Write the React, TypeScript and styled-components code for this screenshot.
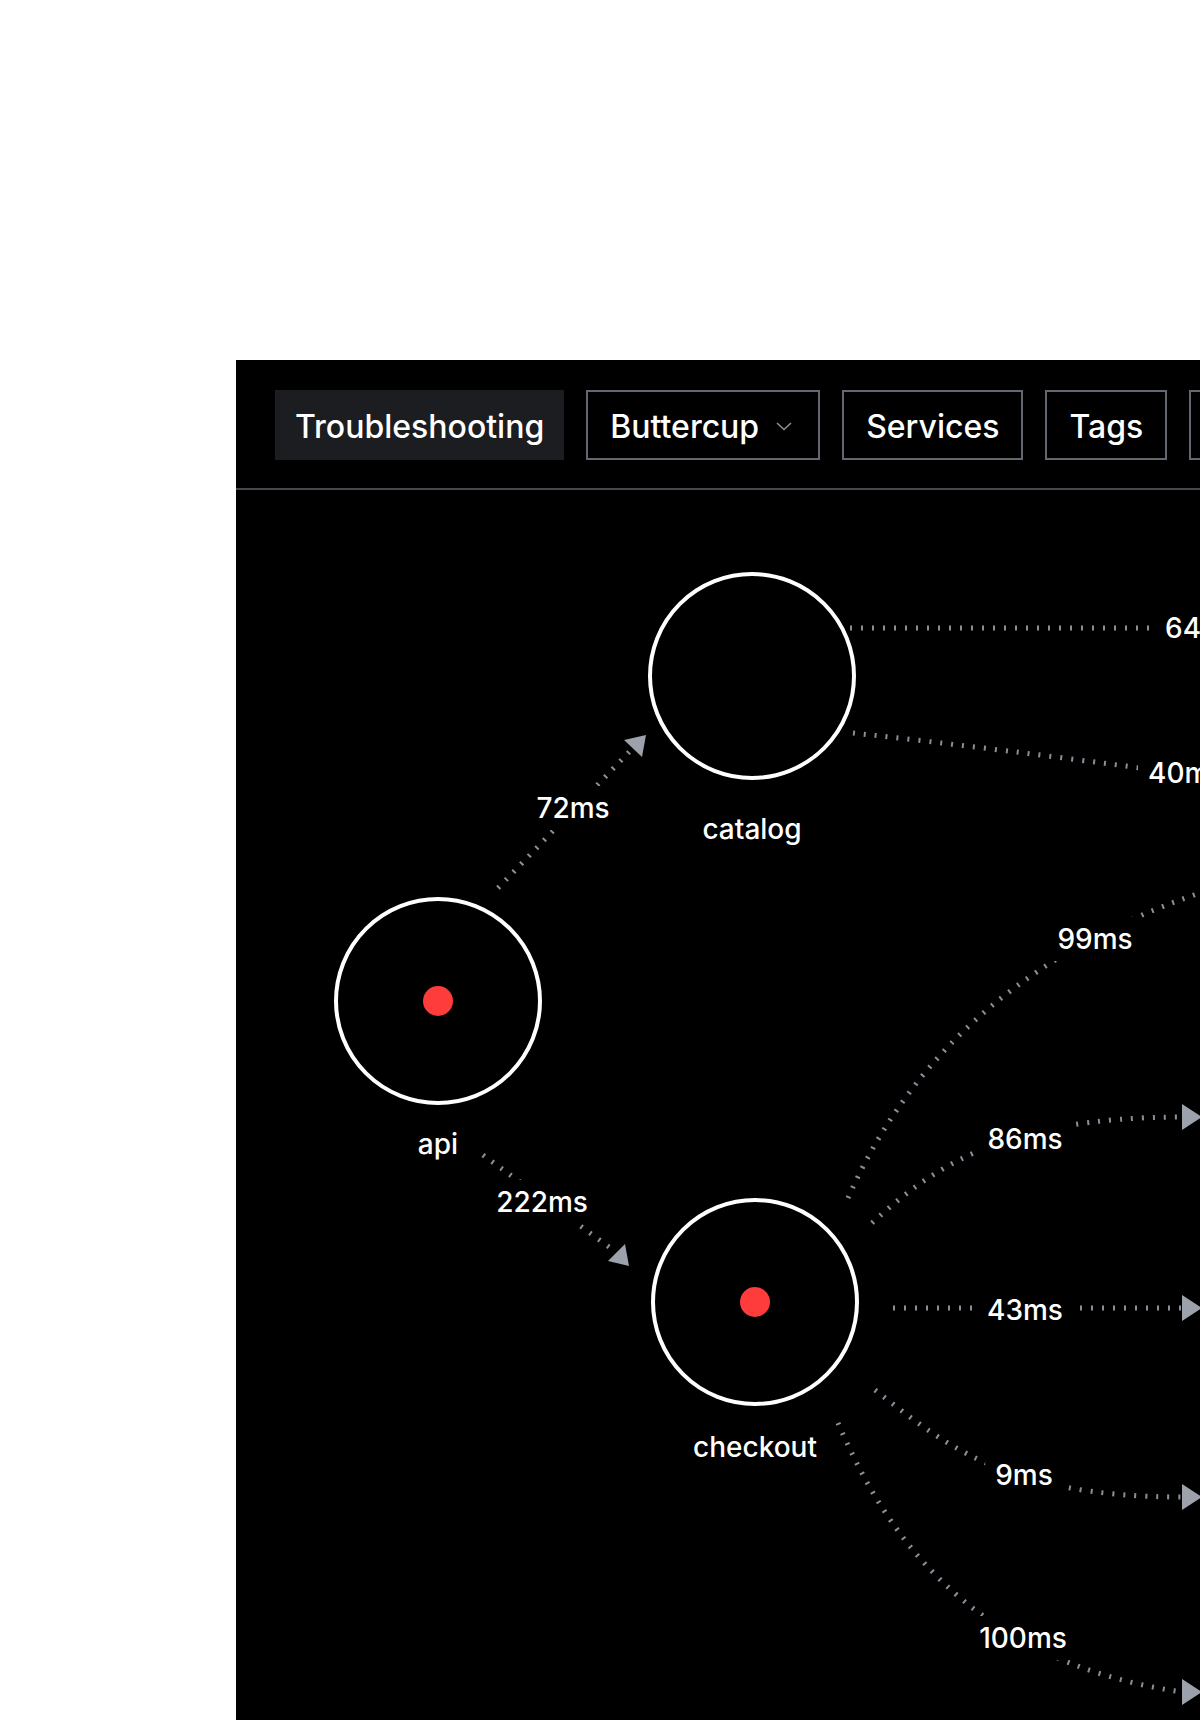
import React from "react";
import styled, { createGlobalStyle } from "styled-components";

const OX = 236;
const OY = 490;

const GlobalStyle = createGlobalStyle`
  html, body { margin: 0; padding: 0; background: #ffffff; }
  body {
    width: 1200px;
    height: 1720px;
    overflow: hidden;
    font-family: Inter, "Noto Sans", sans-serif;
  }
  * { box-sizing: border-box; }
`;

const Page = styled.div`
  width: 1200px;
  height: 1720px;
  padding: 360px 0 0 236px;
`;

const Panel = styled.section`
  width: 964px;
  height: 1360px;
  background: #000000;
  overflow: hidden;
  display: flex;
  flex-direction: column;
`;

const Toolbar = styled.nav`
  flex: none;
  height: 130px;
  display: flex;
  align-items: flex-start;
  gap: 22px;
  padding: 30px 0 0 39px;
  border-bottom: 2px solid #45484f;
  white-space: nowrap;
`;

const Tab = styled.button<{ $active?: boolean }>`
  flex: none;
  height: 70px;
  margin: 0;
  display: inline-flex;
  align-items: center;
  gap: 17px;
  padding: 3px ${(p) => (p.$active ? 18 : 22)}px 0;
  font-family: Inter, "Noto Sans", sans-serif;
  font-size: 32px;
  font-weight: 500;
  line-height: 1;
  color: #ffffff;
  background: ${(p) => (p.$active ? "#1c1d21" : "transparent")};
  border: 2px solid ${(p) => (p.$active ? "#1c1d21" : "#63676f")};
  cursor: pointer;
`;

const Chevron = styled.svg`
  flex: none;
  width: 16px;
  height: 9px;
  margin-right: 4px;
`;

const Canvas = styled.div`
  position: relative;
  flex: 1;
`;

const Wires = styled.svg`
  position: absolute;
  left: 0;
  top: 0;
`;

const Node = styled.div<{ $x: number; $y: number }>`
  position: absolute;
  left: ${(p) => p.$x - OX - 104}px;
  top: ${(p) => p.$y - OY - 104}px;
  width: 208px;
  height: 208px;
  border: 4px solid #ffffff;
  border-radius: 50%;
  display: flex;
  align-items: center;
  justify-content: center;
`;

const Alert = styled.span`
  width: 30px;
  height: 30px;
  border-radius: 50%;
  background: #ff3c3c;
`;

const NodeName = styled.span<{ $x: number; $y: number }>`
  position: absolute;
  left: ${(p) => p.$x - OX}px;
  top: ${(p) => p.$y - OY}px;
  transform: translate(-50%, -50%);
  color: #ffffff;
  font-size: 28px;
  font-weight: 500;
  line-height: 28px;
  white-space: nowrap;
`;

const EdgeLabel = styled.span<{ $x: number; $y: number; $start?: boolean }>`
  position: absolute;
  left: ${(p) => p.$x - OX - (p.$start ? 10 : 0)}px;
  top: ${(p) => p.$y - OY}px;
  transform: ${(p) => (p.$start ? "translateY(-50%)" : "translate(-50%, -50%)")};
  padding: 8px 10px;
  background: #000000;
  color: #ffffff;
  font-size: 28px;
  font-weight: 500;
  line-height: 28px;
  white-space: nowrap;
`;

const wires = [
  "M498,888 L633,748",
  "M483,1155 L616,1252",
  "M850,628 L1200,628",
  "M853,733 Q1000,749 1170,772",
  "M848,1198 C900,1080 1000,960 1200,893",
  "M872,1223 C930,1170 1000,1117 1182,1117",
  "M893,1308 L1182,1308",
  "M875,1390 C940,1440 1000,1497 1182,1497",
  "M838,1423 C880,1520 960,1660 1182,1692",
];

const arrows = [
  "646,735 624,740 642,757",
  "629,1266 608,1261 625,1244",
  "1182,1104 1202,1117 1182,1130",
  "1182,1295 1202,1308 1182,1321",
  "1182,1484 1202,1497 1182,1510",
  "1182,1679 1202,1692 1182,1705",
];

const nodes = [
  { name: "api", x: 438, y: 1001, ly: 1144, alert: true },
  { name: "catalog", x: 752, y: 676, ly: 829, alert: false },
  { name: "checkout", x: 755, y: 1302, ly: 1447, alert: true },
];

const labels = [
  { text: "72ms", x: 573, y: 808 },
  { text: "222ms", x: 542, y: 1202 },
  { text: "64ms", x: 1165, y: 628, start: true },
  { text: "40ms", x: 1148, y: 773, start: true },
  { text: "99ms", x: 1095, y: 939 },
  { text: "86ms", x: 1025, y: 1139 },
  { text: "43ms", x: 1025, y: 1310 },
  { text: "9ms", x: 1024, y: 1475 },
  { text: "100ms", x: 1023, y: 1638 },
];

export default function App() {
  return (
    <>
      <GlobalStyle />
      <Page>
        <Panel>
          <Toolbar>
            <Tab $active>Troubleshooting</Tab>
            <Tab>
              Buttercup
              <Chevron viewBox="0 0 16 9" fill="none">
                <polyline points="1,1 8,7.5 15,1" stroke="#8b8f98" strokeWidth="1.6" />
              </Chevron>
            </Tab>
            <Tab>Services</Tab>
            <Tab>Tags</Tab>
            <Tab>Operations</Tab>
          </Toolbar>
          <Canvas>
            <Wires width={964} height={1230} viewBox={`${OX} ${OY} 964 1230`}>
              {wires.map((d, i) => (
                <path
                  key={i}
                  d={d}
                  fill="none"
                  stroke="#8a909a"
                  strokeWidth={5}
                  strokeDasharray="2 9"
                />
              ))}
              {arrows.map((pts, i) => (
                <polygon key={i} points={pts} fill="#9ca1ac" />
              ))}
            </Wires>
            {nodes.map((n) => (
              <React.Fragment key={n.name}>
                <Node $x={n.x} $y={n.y}>{n.alert && <Alert />}</Node>
                <NodeName $x={n.x} $y={n.ly}>{n.name}</NodeName>
              </React.Fragment>
            ))}
            {labels.map((l) => (
              <EdgeLabel key={l.text} $x={l.x} $y={l.y} $start={l.start}>
                {l.text}
              </EdgeLabel>
            ))}
          </Canvas>
        </Panel>
      </Page>
    </>
  );
}
